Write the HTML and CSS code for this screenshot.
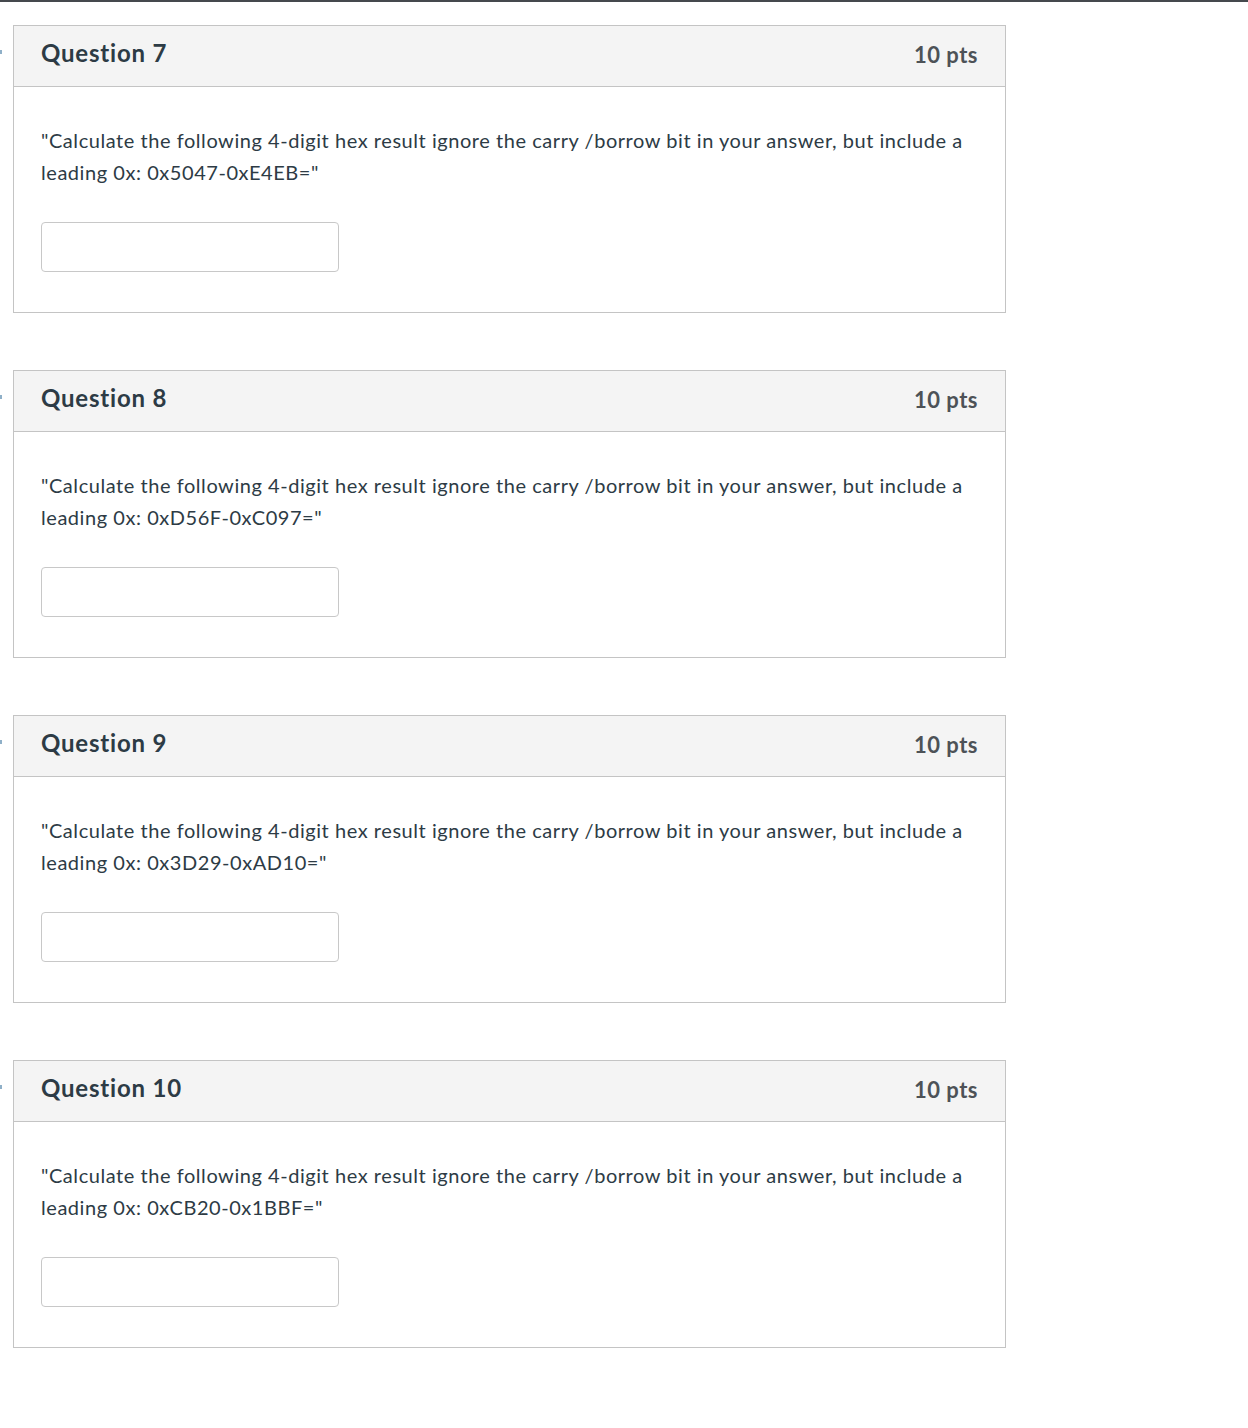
FILE: index.html
```html
<!DOCTYPE html>
<html>
<head>
<meta charset="utf-8">
<link rel="stylesheet" href="styles.css">
</head>
<body>
<div class="topbar"></div>
<div class="quiz">
  <div class="qrow">
    <span class="flag"></span>
    <div class="question">
      <div class="qhead"><h2 class="qtitle">Question 7</h2><span class="pts">10 pts</span></div>
      <div class="qbody">
        <p class="qtext">"Calculate the following 4-digit hex result ignore the carry /borrow bit in your answer, but include a leading 0x: 0x5047-0xE4EB="</p>
        <input class="answer" type="text">
      </div>
    </div>
  </div>
  <div class="qrow">
    <span class="flag"></span>
    <div class="question">
      <div class="qhead"><h2 class="qtitle">Question 8</h2><span class="pts">10 pts</span></div>
      <div class="qbody">
        <p class="qtext">"Calculate the following 4-digit hex result ignore the carry /borrow bit in your answer, but include a leading 0x: 0xD56F-0xC097="</p>
        <input class="answer" type="text">
      </div>
    </div>
  </div>
  <div class="qrow">
    <span class="flag"></span>
    <div class="question">
      <div class="qhead"><h2 class="qtitle">Question 9</h2><span class="pts">10 pts</span></div>
      <div class="qbody">
        <p class="qtext">"Calculate the following 4-digit hex result ignore the carry /borrow bit in your answer, but include a leading 0x: 0x3D29-0xAD10="</p>
        <input class="answer" type="text">
      </div>
    </div>
  </div>
  <div class="qrow">
    <span class="flag"></span>
    <div class="question">
      <div class="qhead"><h2 class="qtitle">Question 10</h2><span class="pts">10 pts</span></div>
      <div class="qbody">
        <p class="qtext">"Calculate the following 4-digit hex result ignore the carry /borrow bit in your answer, but include a leading 0x: 0xCB20-0x1BBF="</p>
        <input class="answer" type="text">
      </div>
    </div>
  </div>
</div>
</body>
</html>
```
FILE: styles.css
```css
html, body {
  margin: 0;
  padding: 0;
  background: #fff;
}
body {
  font-family: Lato, "Noto Sans", sans-serif;
  color: #2d3b45;
}
.topbar {
  height: 2px;
  background: #45494d;
}
.quiz {
  padding-top: 23px;
  display: flex;
  flex-direction: column;
  gap: 57px;
}
.qrow {
  position: relative;
  padding-left: 13px;
  width: 993px;
}
.flag {
  position: absolute;
  left: 0;
  top: 25px;
  width: 2px;
  height: 4px;
  background: #8fb0c8;
}
.question {
  border: 1px solid #c4c4c4;
}
.qhead {
  background: #f4f4f4;
  border-bottom: 1px solid #c4c4c4;
  height: 60px;
  display: flex;
  align-items: center;
  justify-content: space-between;
  padding: 0 27px 0 27px;
}
.qtitle {
  margin: 0;
  font-size: 24px;
  font-weight: 700;
  line-height: 1;
  letter-spacing: 0.8px;
  position: relative;
  top: -3px;
}
.pts {
  font-size: 22px;
  font-weight: 700;
  letter-spacing: 0.5px;
  color: #4d5257;
  position: relative;
  top: -2px;
}
.qbody {
  padding: 37px 27px 40px 27px;
}
.qtext {
  margin: 0 0 34px 0;
  font-size: 20px;
  line-height: 32px;
  letter-spacing: 0.55px;
}
.answer {
  display: block;
  box-sizing: border-box;
  width: 298px;
  height: 50px;
  border: 1px solid #c8c8c8;
  border-radius: 4px;
  background: #fff;
  margin: 0;
  padding: 0 10px;
}
```
